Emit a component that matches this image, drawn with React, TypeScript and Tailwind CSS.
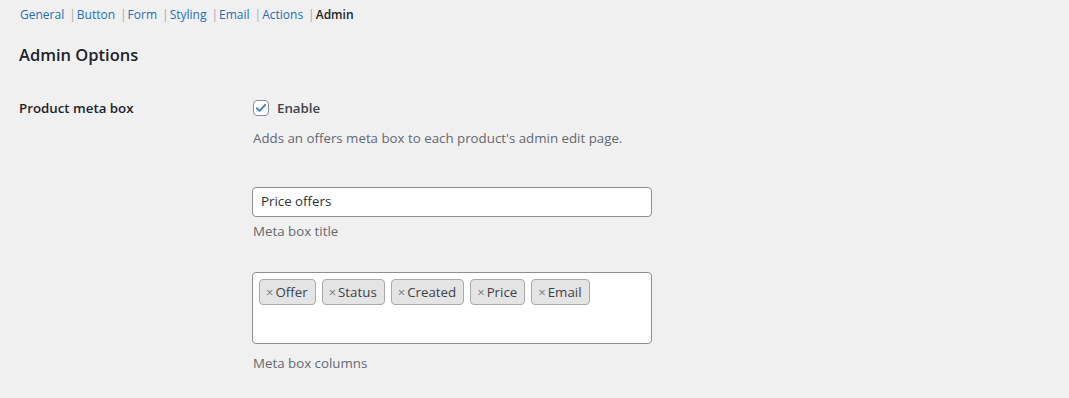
import React from "react";

const tabs = ["General", "Button", "Form", "Styling", "Email", "Actions"];
const columns = ["Offer", "Status", "Created", "Price", "Email"];

export default function App() {
  return (
    <div
      className="min-h-[398px] w-full bg-[#f0f0f1] text-[#3c434a]"
      style={{ fontFamily: '"Open Sans", "Noto Sans", sans-serif' }}
    >
      <div className="px-[20px] pt-[6px] text-[12px] leading-[18px]">
        <ul className="flex items-center">
          {tabs.map((t, i) => (
            <li key={t} className="flex items-center">
              {i > 0 && <span className="ml-[5px] mr-[1px] text-[#a7aaad]">|</span>}
              <span className="text-[#2271b1]">{t}</span>
            </li>
          ))}
          <li className="flex items-center">
            <span className="ml-[5px] mr-[1px] text-[#a7aaad]">|</span>
            <span className="font-semibold text-[#1d2327]">Admin</span>
          </li>
        </ul>
      </div>

      <h2 className="mt-[19px] px-[19px] text-[16.5px] font-semibold leading-[24px] text-[#1d2327]">
        Admin Options
      </h2>

      <div className="mt-[28px] flex px-[19px]">
        <div className="w-[233px] shrink-0 pt-[3px] text-[13.3px] font-semibold leading-[20px] text-[#1d2327]">
          Product meta box
        </div>
        <div className="flex flex-col">
          <label className="flex items-center pt-[4px] pl-[1px]">
            <span className="flex h-[16px] w-[16px] items-center justify-center rounded-[4px] border border-[#8c8f94] bg-white">
              <svg viewBox="0 0 16 16" className="h-[14px] w-[14px]">
                <path d="M3.2 8.2 L6.4 11.3 L12.8 4.4" fill="none" stroke="#3582c4" strokeWidth="2.2" strokeLinecap="round" strokeLinejoin="round" />
              </svg>
            </span>
            <span className="ml-[8px] text-[13.3px] font-semibold leading-[18px] text-[#3c434a]">Enable</span>
          </label>
          <p className="mt-[11px] pl-[1px] text-[13.3px] leading-[20px] text-[#646970]">
            Adds an offers meta box to each product's admin edit page.
          </p>

          <div className="mt-[39px] flex h-[30px] w-[400px] items-center rounded-[4px] border border-[#8c8f94] bg-white px-[8px] text-[13.3px] text-[#2c3338]">
            Price offers
          </div>
          <p className="mt-[4px] pl-[1px] text-[13.3px] leading-[20px] text-[#646970]">Meta box title</p>

          <div className="mt-[31px] h-[72px] w-[400px] rounded-[4px] border border-[#8c8f94] bg-white px-[6px] pt-[6px]">
            <div className="flex flex-wrap gap-[6px]">
              {columns.map((c) => (
                <span
                  key={c}
                  className="flex h-[26px] items-center rounded-[4px] border border-[#aaa] bg-[#e4e4e4] pl-[6px] pr-[7px] pt-[1px] text-[13.3px] text-[#3c434a]"
                >
                  <span className="mr-[2px] text-[13px] text-[#787c82]">×</span>
                  {c}
                </span>
              ))}
            </div>
          </div>
          <p className="mt-[9px] pl-[1px] text-[13.3px] leading-[20px] text-[#646970]">Meta box columns</p>
        </div>
      </div>
    </div>
  );
}
